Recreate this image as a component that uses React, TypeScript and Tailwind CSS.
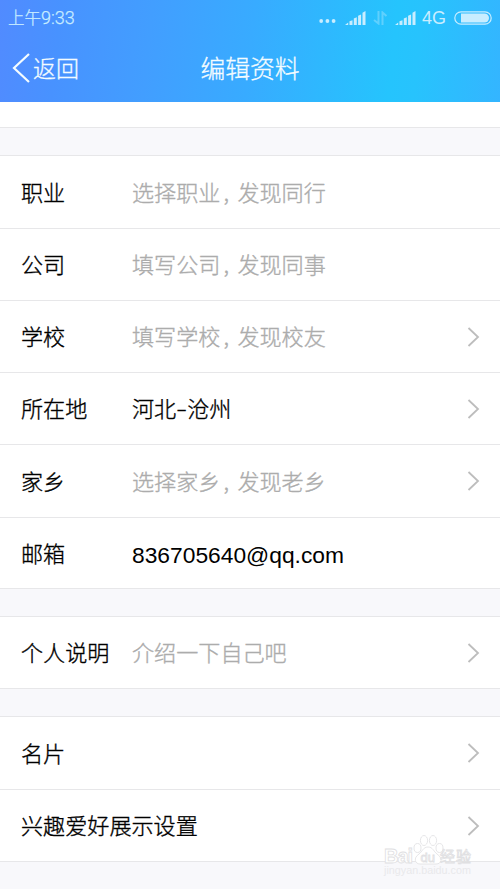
import { Fragment } from "react";

type Item = { label: string; value?: string; filled?: boolean; arrow?: boolean; height: string; latin?: boolean };

const groups: Item[][] = [
  [
    { label: "职业", value: "选择职业,发现同行", height: "h-[73px]" },
    { label: "公司", value: "填写公司,发现同事", height: "h-[72px]" },
    { label: "学校", value: "填写学校,发现校友", arrow: true, height: "h-[72px]" },
    { label: "所在地", value: "河北-沧州", filled: true, arrow: true, height: "h-[72px]" },
    { label: "家乡", value: "选择家乡,发现老乡", arrow: true, height: "h-[73px]" },
    { label: "邮箱", value: "836705640@qq.com", filled: true, latin: true, height: "h-[71px]" },
  ],
  [{ label: "个人说明", value: "介绍一下自己吧", arrow: true, height: "h-[72px]" }],
  [
    { label: "名片", arrow: true, height: "h-[73px]" },
    { label: "兴趣爱好展示设置", arrow: true, height: "h-[72px]" },
  ],
];

function Signal() {
  return (
    <svg width="21" height="14" viewBox="0 0 21 14" fill="currentColor">
      <path d="M0 14l3.2-2.5V14zM4.5 10.2l3-1V14h-3zM8.800 7.600l3-1.300V14h-3zM13.100 4.700l3-1.300V14h-3zM17.500 1.800L20.500 0v14h-3z" />
    </svg>
  );
}

function StatusBar() {
  return (
    <div className="flex h-[35px] items-center pl-[8px] pr-[8px] text-[#c9edff]">
      <span className="text-[16.5px] font-light leading-none [-webkit-text-stroke:0.25px]">
        上午<span className="font-['Roboto',sans-serif] text-[18px]">9:33</span>
      </span>
      <div className="ml-auto flex items-center">
        <svg className="mt-[7px]" width="17" height="4" fill="currentColor">
          <circle cx="2.2" cy="2" r="1.9" />
          <circle cx="8.4" cy="2" r="1.9" />
          <circle cx="14.6" cy="2" r="1.9" />
        </svg>
        <span className="ml-[9px]"><Signal /></span>
        <svg className="ml-[7px] opacity-35" width="15" height="14" fill="none" stroke="currentColor" strokeWidth="2">
          <path d="M5.500 0v12.500L1 9M9.500 14V1.500L13.500 5" />
        </svg>
        <span className="ml-[7px]"><Signal /></span>
        <span className="ml-[6px] font-['Liberation_Sans',sans-serif] text-[18px] leading-none">4G</span>
        <svg className="ml-[8px]" width="38" height="14" viewBox="0 0 38 14">
          <rect x=".8" y=".8" width="36.400" height="12.400" rx="6.200" fill="none" stroke="currentColor" strokeWidth="1.200" />
          <path d="M7 2.500h23.500a4.500 4.500 0 010 9H7z" fill="currentColor" />
        </svg>
      </div>
    </div>
  );
}

function Value({ item }: { item: Item }) {
  const parts = (item.value ?? "").split(",");
  if (item.latin) {
    return (
      <span className="-mb-[3px] pt-[3px] whitespace-nowrap font-['Liberation_Sans',sans-serif] text-[22.8px] font-normal text-black [-webkit-text-stroke:0px]">
        {item.value}
      </span>
    );
  }
  return (
    <span className={`whitespace-nowrap ${item.filled ? "text-black" : "text-[#acacac]"}`}>
      {parts.map((part, i) => (
        <Fragment key={i}>
          {i > 0 && <span className="inline-block w-[17px] pl-[3px]">,</span>}
          {part.includes("-") ? (
            <>
              {part.split("-")[0]}
              <span className="inline-block w-[11px] text-center"><span className="inline-block scale-x-[1.45]">-</span></span>
              {part.split("-")[1]}
            </>
          ) : (
            part
          )}
        </Fragment>
      ))}
    </span>
  );
}

function Row({ item }: { item: Item }) {
  return (
    <div className={`flex ${item.height} items-center border-b border-[#e7e7e9] bg-white pl-[21px] pr-[20px] text-[22.1px] font-light leading-none`}>
      <div className="flex items-center pb-[2px] [-webkit-text-stroke:0.35px]">
        <span className={`shrink-0 whitespace-nowrap text-black ${item.value ? "w-[111px]" : ""}`}>{item.label}</span>
        <Value item={item} />
      </div>
      {item.arrow && (
        <svg className="ml-auto" width="13" height="20" fill="none" stroke="#bdbdbd" strokeWidth="1.800">
          <path d="M1.500 1l9.500 9-9.500 9" />
        </svg>
      )}
    </div>
  );
}

function Watermark() {
  return (
    <div className="absolute left-[383px] top-[834px] font-['Liberation_Sans','Noto_Sans_CJK_SC',sans-serif]">
      <svg width="90" height="46" viewBox="0 0 90 46" fill="#fff" stroke="#e0e0e2" strokeWidth="0.800">
        <text x="1" y="28.500" fontSize="20" fontWeight="bold" textLength="29">Bai</text>
        <ellipse cx="34.500" cy="14" rx="3.500" ry="4.500" />
        <ellipse cx="41" cy="6.500" rx="3.600" ry="5" />
        <ellipse cx="50" cy="6.500" rx="3.600" ry="5" />
        <ellipse cx="56.500" cy="14" rx="3.500" ry="4.500" />
        <path d="M45 13c-5 0-6 5-9 7-6 4-4 10 1 10h16c6 0 7-6 1-10-3-2-4-7-9-7z" />
        <text x="37.500" y="27.500" fontSize="13">du</text>
        <text x="57" y="28" fontSize="15" textLength="31">经验</text>
        <text x="1" y="40" fontSize="10" fill="#e9e9eb" stroke="none" textLength="87" lengthAdjust="spacingAndGlyphs">jingyan.baidu.com</text>
      </svg>
    </div>
  );
}

export default function App() {
  return (
    <div className="relative h-[889px] w-[500px] overflow-hidden bg-[#f8f8fb] font-['Noto_Sans_CJK_SC',sans-serif]">
      <header className="h-[102px] bg-[linear-gradient(96deg,#518bff_0%,#4892ff_12%,#429eff_30%,#38abff_50%,#25c4fd_78%,#27c3fd_83%,#34b5ff_100%)]">
        <StatusBar />
        <div className="grid h-[67px] grid-cols-3 items-center pl-[12px] pr-[12px] pb-[2px] text-[#f4fcff]">
          <div className="flex items-center text-[23px] font-light leading-none [-webkit-text-stroke:0.3px]">
            <svg width="18" height="30" fill="none" stroke="currentColor" strokeWidth="2.200">
              <path d="M17 1L2 15l15 14" />
            </svg>
            <span className="ml-[3px]">返回</span>
          </div>
          <h1 className="text-center text-[24.800px] font-light leading-none [-webkit-text-stroke:0.3px]">编辑资料</h1>
        </div>
      </header>
      <div className="h-[26px] border-b border-[#e7e7e9] bg-white" />
      <main>
        {groups.map((group, i) => (
          <section key={i}>
            <div className="h-[28px] border-b border-[#e7e7e9]" />
            {group.map((item) => (
              <Row key={item.label} item={item} />
            ))}
          </section>
        ))}
      </main>
      <Watermark />
    </div>
  );
}
